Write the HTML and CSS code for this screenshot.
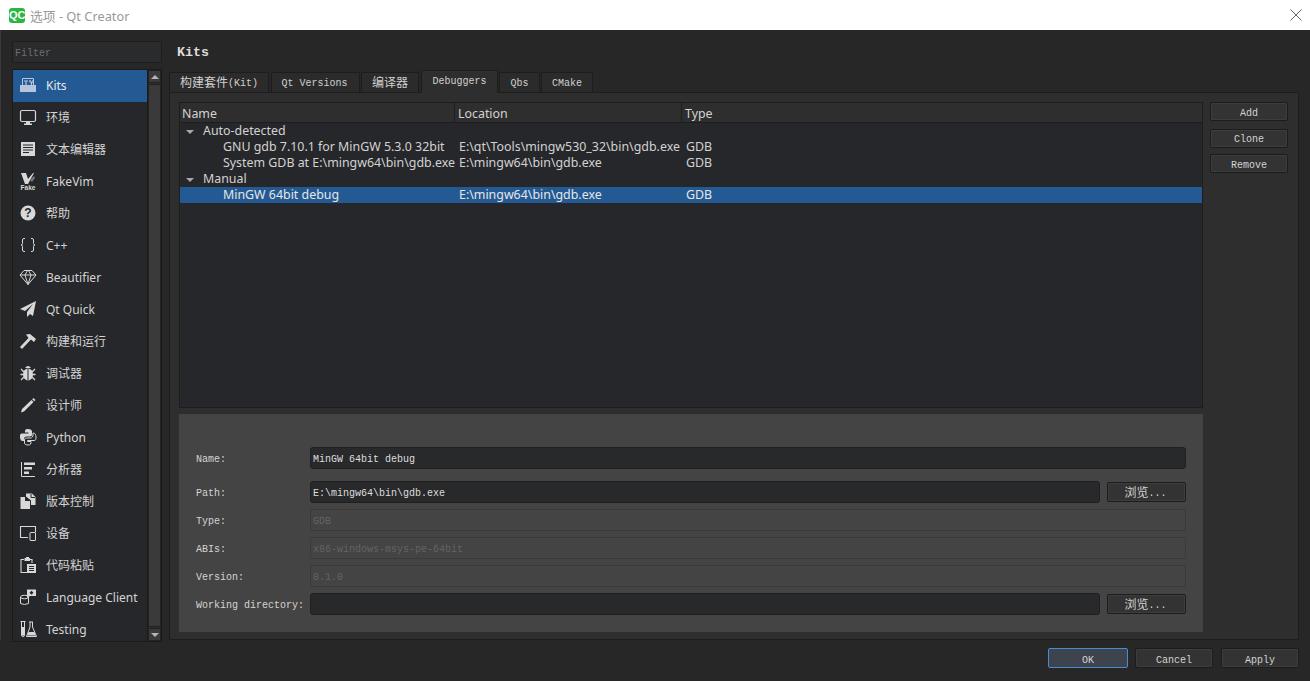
FILE: index.html
```html
<!DOCTYPE html>
<html lang="zh">
<head>
<meta charset="utf-8">
<title>选项 - Qt Creator</title>
<link rel="stylesheet" href="styles.css">
</head>
<body>
<div class="window">
  <header class="titlebar">
    <span class="qc-logo">QC</span>
    <span class="title-text">选项 - Qt Creator</span>
    <svg class="close" width="12" height="12" viewBox="0 0 12 12"><path d="M.5.5l11 11M11.500.5l-11 11" stroke="#666" stroke-width="1" fill="none"/></svg>
  </header>
  <div class="main">
    <aside class="sidebar">
      <div class="filter">Filter</div>
      <div class="catlist">
        <ul class="cats">
          <li class="cat selected"><svg class="ico" viewBox="0 0 18 18"><path d="M3.500 9V2.500h11V9" fill="none" stroke="#b5c6dc"/><path d="M1 9h16v7H1z" fill="#b5c6dc"/><path d="M5 5h4M7 5v4M11 4v2h3V4M12.500 6v3" fill="none" stroke="#b5c6dc" stroke-width="1.200"/></svg><span>Kits</span></li>
          <li class="cat"><svg class="ico" viewBox="0 0 18 18"><rect x="1.500" y="2.500" width="15" height="11" rx="1.500" fill="none" stroke="#d8d8d8" stroke-width="1.200"/><path d="M7 14h4v1.500h2V17H5v-1.500h2z" fill="#d8d8d8"/></svg><span>环境</span></li>
          <li class="cat"><svg class="ico" viewBox="0 0 18 18"><path d="M2 2h14v14H2z" fill="#d8d8d8"/><path d="M4 5h10M4 7.500h10M4 10h10M4 12.500h6" stroke="#26272a" fill="none"/></svg><span>文本编辑器</span></li>
          <li class="cat"><svg class="ico" viewBox="0 0 18 18"><path d="M2 1h5l2 6 5-6h1l-6 11H6z" fill="#d8d8d8"/><path d="M11 8l4-4 1 2-3 4z" fill="#777"/><text x="9" y="17.800" class="fake">Fake</text></svg><span>FakeVim</span></li>
          <li class="cat"><svg class="ico" viewBox="0 0 18 18"><circle cx="9" cy="9" r="7.500" fill="#d8d8d8"/><text x="9" y="13" class="qmark">?</text></svg><span>帮助</span></li>
          <li class="cat"><svg class="ico" viewBox="0 0 18 18"><path d="M6 2.500H5Q3.500 2.500 3.500 4v3.500Q3.500 9 2 9q1.500 0 1.500 1.500V14q0 1.500 1.500 1.500h1M12 2.500h1q1.500 0 1.500 1.500v3.500Q14.500 9 16 9q-1.500 0-1.500 1.500V14q0 1.500-1.500 1.500h-1" fill="none" stroke="#d8d8d8" stroke-width="1"/></svg><span>C++</span></li>
          <li class="cat"><svg class="ico" viewBox="0 0 18 18"><path d="M5 2.500h8L17 7l-8 9.500L1 7zM1 7h16M6 7l3 9.500L12 7 9.500 2.500h-1z" fill="none" stroke="#d8d8d8"/></svg><span>Beautifier</span></li>
          <li class="cat"><svg class="ico" viewBox="0 0 18 18"><path d="M17 1L1 9l5 2 8-7-6 8v5l3-3 3 2z" fill="#d8d8d8"/></svg><span>Qt Quick</span></li>
          <li class="cat"><svg class="ico" viewBox="0 0 18 18"><path d="M7 2.500L11 2l6 5-2 3-3-2.500L3 17l-2-2 8.500-9z" fill="#d8d8d8"/></svg><span>构建和运行</span></li>
          <li class="cat"><svg class="ico" viewBox="0 0 18 18"><ellipse cx="9" cy="10.500" rx="5" ry="6" fill="#d8d8d8"/><path d="M6 4q3-4 6 0z" fill="#d8d8d8"/><path d="M9 5v11.500" stroke="#26272a"/><path d="M2 5l3 3M16 5l-3 3M1.500 10.500h3M16.500 10.500h-3M2 16l3-3M16 16l-3-3" stroke="#d8d8d8" stroke-width="1.300"/></svg><span>调试器</span></li>
          <li class="cat"><svg class="ico" viewBox="0 0 18 18"><path d="M2 16.500l1-3.500L12.500 4l2 2L5 15.500z" fill="#d8d8d8"/><path d="M14.500 2l2 2-1.300 1.300-2-2z" fill="#d8d8d8"/></svg><span>设计师</span></li>
          <li class="cat"><svg class="ico" viewBox="0 0 18 18"><path d="M9 1C6 1 6 2.500 6 4.500h3.500v1H3C1 5.500 1 7 1 9s1 4 2.500 4H5v-2c0-1.500 1-2.500 2.500-2.500h3.500c1.500 0 2-1 2-2v-3C13 2 11.500 1 9 1z" fill="#d8d8d8"/><path d="M9 17c3 0 3-1.500 3-3.500H8.500v-1H15c2 0 2-1.500 2-3.500s-1-4-2.500-4H14v2c0 1.500-1 3-2.500 3H7.500c-1 0-2 .5-2 2v3C5.500 16 6.500 17 9 17z" fill="none" stroke="#d8d8d8"/></svg><span>Python</span></li>
          <li class="cat"><svg class="ico" viewBox="0 0 18 18"><path d="M2.500 2v14.500H16" fill="none" stroke="#d8d8d8"/><path d="M5 2.500h11v2.500H5zM5 7h8v2.500H5zM5 11.500h5V14H5z" fill="#d8d8d8"/></svg><span>分析器</span></li>
          <li class="cat"><svg class="ico" viewBox="0 0 18 18"><path d="M1.500 5H6v4h5v8H1.500z" fill="#d8d8d8"/><path d="M7 1.500h6l3.500 3.500v8H12V8.500L7 4.500z" fill="#d8d8d8"/><path d="M12 2v3.500h4" fill="none" stroke="#26272a"/></svg><span>版本控制</span></li>
          <li class="cat"><svg class="ico" viewBox="0 0 18 18"><path d="M9 13.500H1.500v-11h15V8" fill="none" stroke="#d8d8d8" stroke-width="1.100"/><rect x="11" y="8.500" width="5.500" height="8" rx=".5" fill="#26272a" stroke="#d8d8d8"/></svg><span>设备</span></li>
          <li class="cat"><svg class="ico" viewBox="0 0 18 18"><path d="M9 16.500H2V3.500h3M11 3.500h2V7" fill="none" stroke="#d8d8d8" stroke-width="1.100"/><path d="M5.500 2h1.500V1h3v1h1v3h-5.500z" fill="#d8d8d8"/><path d="M8 8h9v9H8z" fill="#d8d8d8"/><path d="M10 10.500h5M10 12.500h5M10 14.500h5" stroke="#26272a"/></svg><span>代码粘贴</span></li>
          <li class="cat"><svg class="ico" viewBox="0 0 18 18"><ellipse cx="5.500" cy="9" rx="4" ry="1.800" fill="none" stroke="#d8d8d8"/><path d="M1.500 9v6.500q4 2 8 0V9" fill="none" stroke="#d8d8d8"/><path d="M8 1.500h9v6.500h-6l-3 2z" fill="#d8d8d8"/><path d="M12.500 2.800l2 2-2 2-2-2z" fill="#26272a"/></svg><span>Language Client</span></li>
          <li class="cat"><svg class="ico" viewBox="0 0 18 18"><path d="M1.500 1.500h5M2.500 2v13a1.500 1.500 0 0 0 3 0V2" fill="none" stroke="#d8d8d8"/><path d="M3 7h2v8.500H3z" fill="#d8d8d8"/><path d="M10 2h4M11 2v5l-3.500 9.500h10L13.500 7V2" fill="none" stroke="#d8d8d8"/><path d="M9.500 12h6l1 3.500h-8z" fill="#d8d8d8"/></svg><span>Testing</span></li>
        </ul>
        <div class="scrollbar">
          <div class="sb-btn"><i class="tri-up"></i></div>
          <div class="sb-track"></div>
          <div class="sb-btn"><i class="tri-down"></i></div>
        </div>
      </div>
    </aside>
    <section class="content">
      <h1 class="page-title">Kits</h1>
      <nav class="tabs">
        <span class="tab tab-kits"><b class="han">构建套件</b>(Kit)</span>
        <span class="tab tab-qt">Qt Versions</span>
        <span class="tab tab-cc"><b class="han">编译器</b></span>
        <span class="tab tab-dbg">Debuggers</span>
        <span class="tab tab-qbs">Qbs</span>
        <span class="tab tab-cmake">CMake</span>
      </nav>
      <div class="panel">
        <div class="top-area">
          <div class="tree">
            <div class="tree-head">
              <span class="col-a">Name</span><span class="col-b">Location</span><span class="col-c">Type</span>
            </div>
            <div class="row group"><i class="tri-down exp"></i><span>Auto-detected</span></div>
            <div class="row"><span class="col-a indent">GNU gdb 7.10.1 for MinGW 5.3.0 32bit</span><span class="col-b">E:\qt\Tools\mingw530_32\bin\gdb.exe</span><span class="col-c">GDB</span></div>
            <div class="row"><span class="col-a indent">System GDB at E:\mingw64\bin\gdb.exe</span><span class="col-b">E:\mingw64\bin\gdb.exe</span><span class="col-c">GDB</span></div>
            <div class="row group"><i class="tri-down exp"></i><span>Manual</span></div>
            <div class="row current"><span class="col-a indent">MinGW 64bit debug</span><span class="col-b">E:\mingw64\bin\gdb.exe</span><span class="col-c">GDB</span></div>
          </div>
          <div class="side-buttons">
            <button class="btn mid">Add</button>
            <button class="btn clone">Clone</button>
            <button class="btn remove mid">Remove</button>
          </div>
        </div>
        <div class="details">
          <div class="frow"><label>Name:</label><div class="field">MinGW 64bit debug</div></div>
          <div class="frow path"><label>Path:</label><div class="field">E:\mingw64\bin\gdb.exe</div><button class="btn browse"><b class="han">浏览</b>...</button></div>
          <div class="frow"><label>Type:</label><div class="field off">GDB</div></div>
          <div class="frow"><label>ABIs:</label><div class="field off">x86-windows-msys-pe-64bit</div></div>
          <div class="frow"><label>Version:</label><div class="field off">8.1.0</div></div>
          <div class="frow"><label>Working directory:</label><div class="field"></div><button class="btn browse"><b class="han">浏览</b>...</button></div>
        </div>
      </div>
    </section>
  </div>
  <footer class="footer">
    <button class="btn dlg default">OK</button>
    <button class="btn dlg">Cancel</button>
    <button class="btn dlg apply">Apply</button>
  </footer>
</div>
</body>
</html>
```

FILE: styles.css
```css
* { box-sizing: border-box; }
html, body { margin: 0; padding: 0; }
body {
  width: 1310px; height: 681px; overflow: hidden;
  background: #272727;
  font-family: "Noto Sans", "Noto Sans CJK SC", sans-serif;
  font-size: 12px;
  color: #d2d2d2;
}
.window { height: 681px; display: flex; flex-direction: column; }
.han { font: 12px/1 "Noto Sans CJK SC", sans-serif; vertical-align: -1px; }

.titlebar { height: 30px; background: #fff; display: flex; align-items: center; padding: 0 8px 0 9px; flex: none; }
.qc-logo { width: 16px; height: 15px; background: #27b83f; color: #fff; border-radius: 3px; font: bold 11px/15px "Liberation Sans", sans-serif; text-align: center; }
.title-text { margin-left: 5px; color: #999; font-size: 12.800px; }
.close { margin-left: auto; }

.main { flex: none; height: 610px; padding: 11px 11px 0 11px; display: flex; gap: 7px; border-left: 1px solid #3a3a3a; }

.sidebar { width: 150px; display: flex; flex-direction: column; gap: 6px; height: 601px; }
.filter { height: 22px; background: #2a2b2d; border: 1px solid #1d1d1d; border-radius: 2px; font: 10px/23px "Liberation Mono", monospace; color: #6e6e6e; padding-left: 2px; }
.catlist { flex: 1; display: flex; border: 1px solid #1b1b1b; border-right: 0; background: #26272a; min-height: 0; }
.cats { list-style: none; margin: 0; padding: 0; width: 134px; overflow: hidden; flex: none; }
.cat { height: 32px; display: flex; align-items: center; padding-left: 6px; gap: 9px; font-size: 12px; color: #d4d4d4; white-space: nowrap; }
.cat span { position: relative; top: -1px; }
.cat.selected { background: #235a94; color: #e4e8ee; }
.ico { width: 18px; height: 18px; flex: none; position: relative; top: -1px; }
.fake { font: bold 6.500px "Liberation Sans", sans-serif; fill: #d8d8d8; text-anchor: middle; }
.qmark { font: bold 12px "Liberation Sans", sans-serif; fill: #26272a; text-anchor: middle; }

.scrollbar { flex: 1; display: flex; flex-direction: column; background: #2e2e2e; border-left: 1px solid #1b1b1b; border-right: 1px solid #1b1b1b; }
.sb-btn { height: 13px; background: #3a3a3a; border: 1px solid #222; display: flex; align-items: center; justify-content: center; flex: none; }
.sb-track { flex: 1; background: #3a3a3a; border: 1px solid #222; margin: 1px 0; }
.tri-up, .tri-down { display: block; width: 0; height: 0; border-left: 4px solid transparent; border-right: 4px solid transparent; }
.tri-up { border-bottom: 4px solid #b5b5b5; }
.tri-down { border-top: 4px solid #b5b5b5; }

.content { width: 1130px; display: flex; flex-direction: column; }
.page-title { margin: 5px 0 0 8px; height: 25px; font: bold 13.300px/14px "Liberation Mono", monospace; color: #ddd; }
.tabs { display: flex; align-items: flex-end; height: 22px; position: relative; z-index: 1; }
.tab { height: 20px; background: #2b2b2b; border: 1px solid #1d1d1d; border-bottom: 0; border-radius: 2px 2px 0 0; font: 10px/21px "Liberation Mono", "Noto Sans CJK SC", monospace; color: #d0d0d0; white-space: nowrap; text-align: center; }
.tab-kits { width: 100px; margin-right: 2px; }
.tab-qt { width: 89px; margin-right: 1px; padding-right: 2px; }
.tab-cc { width: 58px; margin-right: 2px; }
.tab-dbg { width: 77px; margin-right: 1px; height: 23px; background: #2e2e2e; margin-bottom: -1px; line-height: 22px; }
.tab-qbs { width: 41px; margin-right: 1px; }
.tab-cmake { width: 52px; }

.panel { height: 548px; background: #2e2e2e; border: 1px solid #1d1d1d; padding: 9px 10px 7px 9px; display: flex; flex-direction: column; gap: 6px; }
.top-area { display: flex; gap: 7px; height: 306px; }
.tree { flex: none; width: 1024px; background: #26272a; border: 1px solid #1d1d1d; font-size: 12.400px; }
.tree-head { display: flex; height: 20px; background: #2e2e2e; border-bottom: 1px solid #1d1d1d; line-height: 22px; }
.tree-head .col-a { width: 275px; padding-left: 2px; border-right: 1px solid #1d1d1d; }
.tree-head .col-b { width: 227px; padding-left: 3px; border-right: 1px solid #1d1d1d; }
.tree-head .col-c { padding-left: 3px; }
.row { display: flex; height: 16px; line-height: 16px; white-space: nowrap; }
.row .col-a { width: 279px; flex: none; overflow: hidden; }
.row .col-b { width: 227px; flex: none; }
.indent { padding-left: 43px; }
.group { padding-left: 6px; align-items: center; }
.group span { margin-left: 9px; }
.exp { margin-top: 1px; border-top-color: #a8a8a8; }
.current { background: #235a94; color: #e6e6e6; }

.side-buttons { display: flex; flex-direction: column; width: 78px; gap: 7px; }
.btn { height: 19px; padding: 2px 0 0; background: #333; border: 1px solid #1c1c1c; border-radius: 2px; box-shadow: inset 0 0 0 1px #3d3d3d; font: 10px/15px "Liberation Mono", "Noto Sans CJK SC", monospace; color: #d4d4d4; }
.btn.mid { padding-top: 3px; }
.clone { margin-top: 1px; }
.remove { margin-top: -1px; }

.details { width: 1024px; height: 218px; background: #444; padding: 33px 17px 0 17px; display: flex; flex-direction: column; gap: 6px; }
.frow { display: flex; align-items: center; height: 22px; }
.frow.path { margin-top: 6px; }
.frow label { width: 114px; flex: none; padding-top: 2px; font: 10px/17px "Liberation Mono", monospace; color: #d4d4d4; white-space: nowrap; }
.field { flex: 1; height: 22px; background: #28292b; border: 1px solid #202020; border-radius: 3px; padding-left: 2px; font: 10px/23px "Liberation Mono", monospace; color: #dedede; }
.field.off { background: #444; border-color: #393939; color: #636363; }
.browse { width: 79px; height: 20px; margin-left: 7px; flex: none; padding-right: 2px; }

.footer { flex: none; height: 41px; display: flex; justify-content: flex-end; padding: 8px 11px 0 0; gap: 7px; }
.btn.dlg { width: 78px; height: 20px; padding-top: 4px; }
.apply { margin-left: 1px; }
.btn.default { width: 80px; background: #3e444e; border-color: #4a8ad4; box-shadow: none; }
```
